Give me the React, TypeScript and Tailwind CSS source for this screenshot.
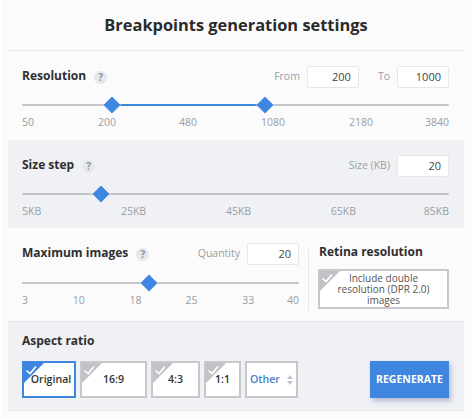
import { ReactNode } from "react";

const FONT = "font-['Open_Sans',sans-serif]";

function Help() {
  return (
    <span className="ml-[8px] inline-flex h-[13px] w-[13px] items-center justify-center rounded-full bg-[#e6e8ee] text-[10px] font-bold leading-none text-[#8b929e]">
      ?
    </span>
  );
}

function Field({ label, value }: { label: string; value: string }) {
  return (
    <div className="flex items-center">
      <span className="mr-[7px] text-[10.5px] text-[#999ea6]">{label}</span>
      <div className="flex h-[22px] w-[52px] items-center justify-end rounded-[2px] border border-[#e6e7ea] bg-white pr-[7px] text-[11px] text-[#444]">
        {value}
      </div>
    </div>
  );
}

function Thumb({ left }: { left: number }) {
  return (
    <span
      className="absolute top-[-5px] h-[12px] w-[12px] rotate-45 bg-[#3f86e0] shadow-[0_0_0_1px_rgba(255,255,255,0.35)]"
      style={{ left: left - 6 }}
    />
  );
}

function Slider({ thumbs, fill, children }: { thumbs: number[]; fill?: [number, number]; children: ReactNode }) {
  return (
    <div>
      <div className="relative h-[2px] rounded-full bg-[#c3c4c7]">
        {fill && (
          <span
            className="absolute top-0 h-[2px] bg-[#3f86e0]"
            style={{ left: fill[0], width: fill[1] - fill[0] }}
          />
        )}
        {thumbs.map((t) => (
          <Thumb key={t} left={t} />
        ))}
      </div>
      <div className="mt-[9px] flex text-[10.5px] leading-[15px] text-[#999ea6]">{children}</div>
    </div>
  );
}

function Corner({ color }: { color: string }) {
  return (
    <svg className="absolute left-0 top-0" width="20" height="20" viewBox="0 0 20 20">
      <path d="M0 0H20L0 20Z" fill={color} />
      <path d="M2.5 7.5L6 10.5L12 3.5" fill="none" stroke="#fff" strokeWidth="1.6" />
    </svg>
  );
}

function Ratio({ label, width, active }: { label: string; width: string; active?: boolean }) {
  return (
    <div
      className={`relative flex h-[37px] items-center justify-center bg-white text-[10.6px] font-semibold text-[#333] border-2 ${width} ${
        active ? "border-[#3f86e0] pl-[4px]" : "border-[#c6c8cc]"
      }`}
    >
      <Corner color={active ? "#3f86e0" : "#c0c2c6"} />
      <span className="relative">{label}</span>
    </div>
  );
}

export default function App() {
  return (
    <div className={`${FONT} h-[419px] w-[474px] overflow-hidden bg-white`}>
      <div className="mx-[2px] h-[419px] bg-[#fbfbfb] pl-[6px] pr-[8px]">
        <h1 className="flex h-[51px] items-center justify-center border-b border-[#e6e7ea] text-[16.4px] font-bold text-[#2b2b2b]">
          Breakpoints generation settings
        </h1>

        <section className="h-[89px] pl-[14px] pr-[15px] pt-[15px]">
          <div className="flex h-[22px] items-center">
            <h2 className="-mt-[2px] text-[12px] font-bold text-[#2f2f2f]">Resolution</h2>
            <Help />
            <div className="ml-auto flex items-center">
              <Field label="From" value="200" />
              <div className="ml-[19px]">
                <Field label="To" value="1000" />
              </div>
            </div>
          </div>
          <div className="mt-[16px]">
            <Slider thumbs={[90, 243]} fill={[90, 243]}>
              <span className="w-[76px]">50</span>
              <span className="w-[81px]">200</span>
              <span className="w-[82px]">480</span>
              <span className="w-[88px]">1080</span>
              <span className="w-[76px]">2180</span>
              <span>3840</span>
            </Slider>
          </div>
        </section>

        <section className="h-[88px] bg-[#f0f1f5] pl-[14px] pr-[15px] pt-[15px]">
          <div className="flex h-[22px] items-center">
            <h2 className="-mt-[2px] text-[12px] font-bold text-[#2f2f2f]">Size step</h2>
            <Help />
            <div className="ml-auto">
              <Field label="Size (KB)" value="20" />
            </div>
          </div>
          <div className="mt-[16px]">
            <Slider thumbs={[79]}>
              <span className="w-[99px]">5KB</span>
              <span className="w-[105px]">25KB</span>
              <span className="w-[105px]">45KB</span>
              <span className="w-[93px]">65KB</span>
              <span>85KB</span>
            </Slider>
          </div>
        </section>

        <section className="flex h-[94px] border-b border-[#e6e7ea] pl-[14px] pr-[15px] pt-[15px]">
          <div className="w-[277px]">
            <div className="flex h-[22px] items-center">
              <h2 className="-mt-[2px] text-[12px] font-bold text-[#2f2f2f]">Maximum images</h2>
              <Help />
              <div className="ml-auto">
                <Field label="Quantity" value="20" />
              </div>
            </div>
            <div className="mt-[17px]">
              <Slider thumbs={[127]}>
                <span className="w-[51px]">3</span>
                <span className="w-[57px]">10</span>
                <span className="w-[56px]">18</span>
                <span className="w-[57px]">25</span>
                <span className="w-[45px]">33</span>
                <span>40</span>
              </Slider>
            </div>
          </div>
          <div className="ml-[9px] mt-[6px] h-[62px] border-l border-[#e6e7ea]" />
          <div className="ml-[9px] w-[131px]">
            <h2 className="-mt-[2px] flex h-[22px] items-center pl-[1px] text-[12px] font-bold text-[#2f2f2f]">Retina resolution</h2>
            <div className="relative mt-[6px] flex h-[40px] items-center justify-center border-2 border-[#c6c8cc] bg-white text-center text-[10px] leading-[11px] text-[#555]">
              <Corner color="#c0c2c6" />
              <span className="relative px-[14px]">Include double resolution (DPR 2.0) images</span>
            </div>
          </div>
        </section>

        <section className="h-[89px] border-b border-[#e6e7ea] bg-[#f0f1f5] pl-[14px] pr-[15px] pt-[10px]">
          <h2 className="text-[12px] font-bold leading-[18px] text-[#2f2f2f]">Aspect ratio</h2>
          <div className="mt-[11px] flex items-center gap-[4px]">
            <Ratio label="Original" width="w-[54px]" active />
            <Ratio label="16:9" width="w-[67px]" />
            <Ratio label="4:3" width="w-[49px]" />
            <Ratio label="1:1" width="w-[37px]" />
            <div className="flex h-[37px] w-[53px] items-center justify-between border-2 border-[#c6c8cc] bg-white pl-[3px] pr-[3px] text-[10.6px] font-semibold text-[#4a7fc9]">
              Other
              <svg width="6" height="10" viewBox="0 0 6 10">
                <path d="M3 0L6 4H0Z M3 10L0 6H6Z" fill="#c0c2c6" />
              </svg>
            </div>
            <button className="ml-auto h-[37px] w-[79px] bg-[#3f86e0] text-[10.5px] font-bold text-white shadow-[2px_3px_5px_rgba(60,90,140,0.35)]">
              REGENERATE
            </button>
          </div>
        </section>
      </div>
    </div>
  );
}
